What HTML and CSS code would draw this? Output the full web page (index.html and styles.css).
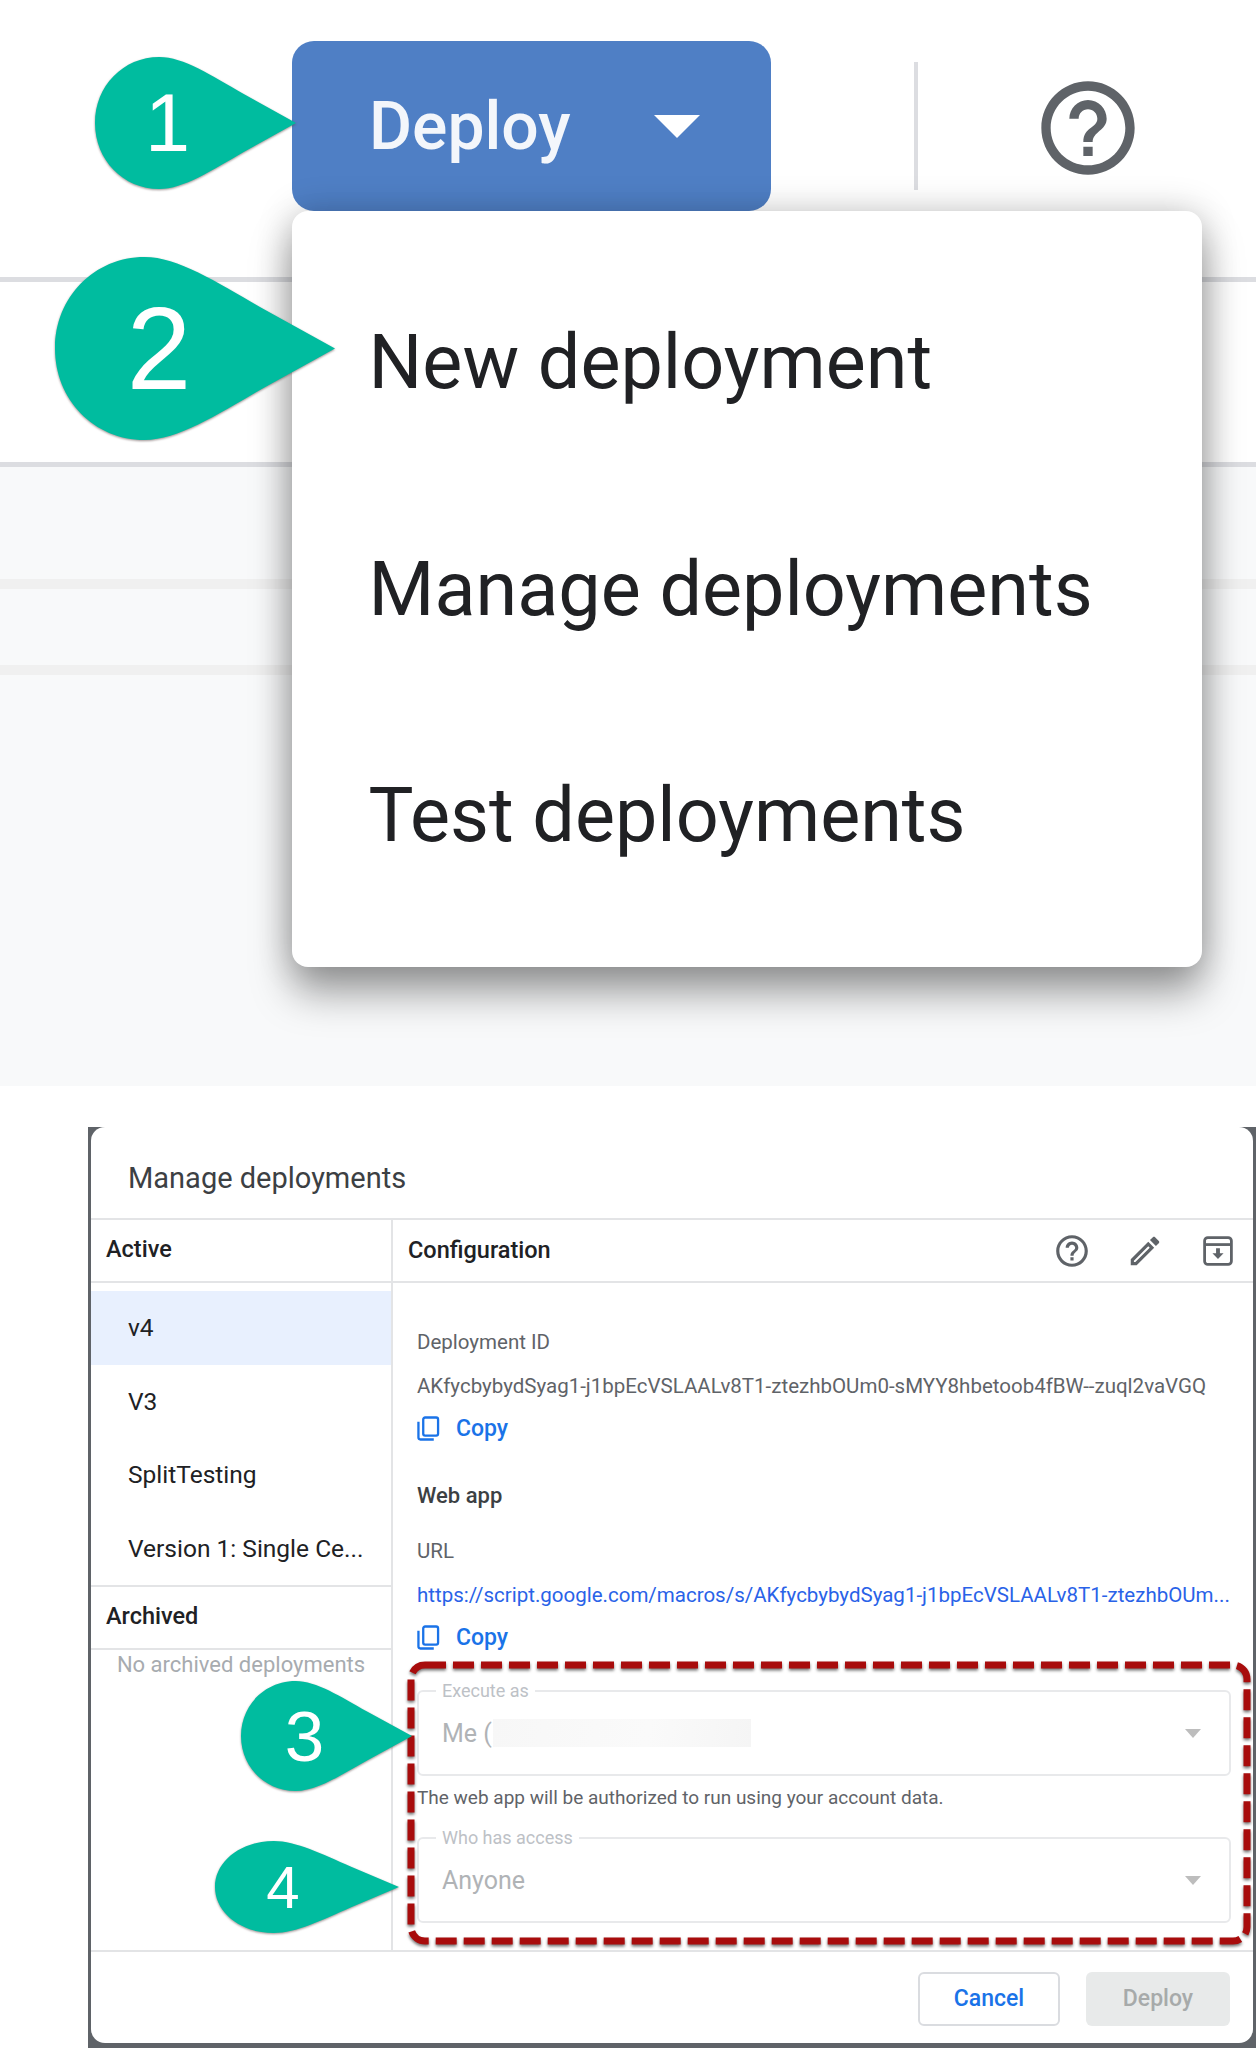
FILE: index.html
```html
<!DOCTYPE html>
<html lang="en">

<head>
    <meta charset="UTF-8">
    <title>Deploy steps</title>
    <link rel="stylesheet" href="styles.css">
</head>

<body>
    <div class="page">

        <section class="editor">
            <div class="toolbar">
                <button class="deploy-button">
                    <span>Deploy</span>
                    <i class="deploy-arrow"></i>
                </button>
                <div class="toolbar-divider"></div>
                <svg class="help-big" viewBox="0 0 24 24">
                    <path d="M11 18h2v-2h-2v2zm1-16C6.48 2 2 6.48 2 12s4.48 10 10 10 10-4.48 10-10S17.52 2 12 2zm0 18c-4.41 0-8-3.59-8-8s3.59-8 8-8 8 3.59 8 8-3.59 8-8 8zm0-14c-2.21 0-4 1.79-4 4h2c0-1.1.9-2 2-2s2 .9 2 2c0 2-3 1.75-3 5h2c0-2.25 3-2.5 3-5 0-2.21-1.79-4-4-4z" />
                </svg>
            </div>
            <div class="editor-row"></div>
            <div class="editor-grey">
                <div class="band band-one"></div>
                <div class="band band-two"></div>
            </div>

            <ul class="deploy-menu">
                <li>New deployment</li>
                <li>Manage deployments</li>
                <li>Test deployments</li>
            </ul>
        </section>

        <section class="dialog-frame">
            <div class="dialog">
                <h2 class="dialog-title">Manage deployments</h2>

                <div class="dialog-body">
                    <aside class="versions">
                        <h3 class="col-head">Active</h3>
                        <ul class="version-list">
                            <li class="selected">v4</li>
                            <li>V3</li>
                            <li>SplitTesting</li>
                            <li>Version 1: Single Ce...</li>
                        </ul>
                        <h3 class="col-head archived-head">Archived</h3>
                        <p class="no-archived">No archived deployments</p>
                    </aside>

                    <div class="config">
                        <div class="col-head config-head">
                            <span>Configuration</span>
                            <div class="config-icons">
                                <svg class="icon-help" viewBox="0 0 24 24">
                                    <path d="M11 18h2v-2h-2v2zm1-16C6.48 2 2 6.48 2 12s4.48 10 10 10 10-4.48 10-10S17.52 2 12 2zm0 18c-4.41 0-8-3.59-8-8s3.59-8 8-8 8 3.59 8 8-3.59 8-8 8zm0-14c-2.21 0-4 1.79-4 4h2c0-1.1.9-2 2-2s2 .9 2 2c0 2-3 1.75-3 5h2c0-2.25 3-2.5 3-5 0-2.21-1.79-4-4-4z" />
                                </svg>
                                <svg class="icon-edit" viewBox="0 0 24 24">
                                    <path d="M14.06 9.02l.92.92L5.92 19H5v-.92l9.06-9.06M17.66 3c-.25 0-.51.1-.7.29l-1.83 1.83 3.75 3.75 1.83-1.83c.39-.39.39-1.02 0-1.41l-2.34-2.34c-.2-.2-.45-.29-.71-.29zm-3.6 3.19L3 17.25V21h3.75L17.81 9.94l-3.75-3.75z" />
                                </svg>
                                <svg class="icon-archive" viewBox="0 0 28 28">
                                    <rect x="1.5" y="1.5" width="25" height="25" rx="3" />
                                    <path d="M1.5 8h25" />
                                    <path class="arrow-fill" d="M12.2 11.5h3.6v4.5h3.4L14 21.5 8.8 16h3.4z" />
                                </svg>
                            </div>
                        </div>

                        <div class="config-content">
                            <p class="field-label first">Deployment ID</p>
                            <p class="field-value">AKfycbybydSyag1-j1bpEcVSLAALv8T1-ztezhbOUm0-sMYY8hbetoob4fBW--zuql2vaVGQ</p>
                            <a class="copy-link">
                                <svg viewBox="0 0 24 26">
                                    <rect x="6.5" y="1.5" width="15.5" height="19" rx="2" />
                                    <path d="M1.5 6v16.5a2 2 0 0 0 2 2h14" />
                                </svg>
                                Copy
                            </a>

                            <h4 class="web-app">Web app</h4>
                            <p class="field-label url-label">URL</p>
                            <p class="url-value">https://script.google.com/macros/s/AKfycbybydSyag1-j1bpEcVSLAALv8T1-ztezhbOUm...</p>
                            <a class="copy-link">
                                <svg viewBox="0 0 24 26">
                                    <rect x="6.5" y="1.5" width="15.5" height="19" rx="2" />
                                    <path d="M1.5 6v16.5a2 2 0 0 0 2 2h14" />
                                </svg>
                                Copy
                            </a>

                            <fieldset class="select-box execute-box">
                                <legend>Execute as</legend>
                                <div class="select-row">
                                    <span>Me (<i class="redacted"></i></span>
                                    <i class="select-arrow"></i>
                                </div>
                            </fieldset>
                            <p class="helper">The web app will be authorized to run using your account data.</p>
                            <fieldset class="select-box">
                                <legend>Who has access</legend>
                                <div class="select-row">
                                    <span>Anyone</span>
                                    <i class="select-arrow"></i>
                                </div>
                            </fieldset>
                        </div>
                    </div>
                </div>

                <div class="dialog-footer">
                    <button class="btn-cancel">Cancel</button>
                    <button class="btn-deploy">Deploy</button>
                </div>
            </div>
        </section>

        <!-- red dashed highlight -->
        <svg class="highlight" viewBox="0 0 851 296">
            <rect x="6" y="5" width="836" height="276" rx="14" />
        </svg>

        <!-- numbered callouts -->
        <div class="callout callout-1">
            <svg viewBox="0 0 100 100" preserveAspectRatio="none"><path d="M100 50L74 28C58 14 44 0 32 0 14 0 0 22 0 50s14 50 32 50c12 0 26-14 42-28z" /></svg>
            <span>1</span>
        </div>
        <div class="callout callout-2">
            <svg viewBox="0 0 100 100" preserveAspectRatio="none"><path d="M100 50L74 28C58 14 44 0 32 0 14 0 0 22 0 50s14 50 32 50c12 0 26-14 42-28z" /></svg>
            <span>2</span>
        </div>
        <div class="callout callout-3">
            <svg viewBox="0 0 100 100" preserveAspectRatio="none"><path d="M100 50L74 28C58 14 44 0 32 0 14 0 0 22 0 50s14 50 32 50c12 0 26-14 42-28z" /></svg>
            <span>3</span>
        </div>
        <div class="callout callout-4">
            <svg viewBox="0 0 100 100" preserveAspectRatio="none"><path d="M100 50L74 28C58 14 44 0 32 0 14 0 0 22 0 50s14 50 32 50c12 0 26-14 42-28z" /></svg>
            <span>4</span>
        </div>

    </div>
</body>

</html>
```
FILE: styles.css
```css
* {
    margin: 0;
    padding: 0;
    box-sizing: border-box;
    font-family: Roboto, "Liberation Sans", sans-serif;
}

body {
    background-color: #fff;
    width: 1256px;
    height: 2048px;
    overflow: hidden;
}

.page {
    position: relative;
    width: 1256px;
    height: 2048px;
    overflow: hidden;
}

/* top part, the editor with the open deploy menu */

.editor {
    position: relative;
    height: 1086px;
    display: flex;
    flex-direction: column;
}

.toolbar {
    height: 282px;
    padding: 41px 0 0 292px;
    display: flex;
    align-items: flex-start;
    border-bottom: 5px solid #dcdde1;
}

.deploy-button {
    width: 479px;
    height: 170px;
    padding: 0 71px 0 77px;
    display: flex;
    align-items: center;
    justify-content: space-between;
    border: none;
    border-radius: 22px;
    background-color: #4f7fc5;
    color: #f3f6fb;
    font-size: 66px;
    font-weight: 500;
}

.deploy-arrow {
    width: 0;
    height: 0;
    border-left: 23px solid transparent;
    border-right: 23px solid transparent;
    border-top: 23px solid #fff;
}

.toolbar-divider {
    width: 4px;
    height: 128px;
    margin: 21px 0 0 143px;
    background-color: #dcdde1;
}

.help-big {
    width: 112px;
    height: 112px;
    margin: 31px 0 0 114px;
    fill: #5f6368;
}

.editor-row {
    height: 185px;
    border-bottom: 5px solid #dcdde1;
}

.editor-grey {
    flex: 1;
    background-color: #f8f9fa;
    padding-top: 112px;
}

.band {
    height: 10px;
    background-color: #f0f0f0;
}

.band-two {
    margin-top: 76px;
}

.deploy-menu {
    position: absolute;
    left: 292px;
    top: 211px;
    width: 910px;
    height: 756px;
    padding: 38px 0;
    list-style: none;
    background-color: #fff;
    border-radius: 16px;
    box-shadow: 0 26px 40px rgba(0, 0, 0, 0.36), 0 0 36px rgba(0, 0, 0, 0.2);
}

.deploy-menu li {
    height: 226.6px;
    padding-left: 76.5px;
    display: flex;
    align-items: center;
    font-size: 75.5px;
    color: #202124;
}

/* bottom part, the manage deployments dialog */

.dialog-frame {
    height: 921px;
    margin: 41px 0 0 88px;
    padding: 0 3px 5px 3px;
    background-color: #5f6368;
}

.dialog {
    height: 100%;
    display: flex;
    flex-direction: column;
    background-color: #fff;
    border-radius: 14px;
}

.dialog-title {
    height: 93px;
    padding: 32px 0 0 37px;
    border-bottom: 2px solid #e3e4e6;
    font-size: 29px;
    line-height: 38px;
    font-weight: 400;
    color: #3c4043;
}

.dialog-body {
    flex: 1;
    display: flex;
    min-height: 0;
}

.versions {
    flex: 0 0 302px;
    border-right: 2px solid #e3e4e6;
}

.col-head {
    height: 63px;
    padding-left: 15px;
    border-bottom: 2px solid #e3e4e6;
    font-size: 23.5px;
    line-height: 59px;
    font-weight: 500;
    color: #202124;
}

.version-list {
    list-style: none;
    padding: 8px 0 0;
    border-bottom: 2px solid #e3e4e6;
}

.version-list li {
    height: 73.5px;
    padding-left: 37px;
    font-size: 24.5px;
    line-height: 73px;
    color: #202124;
    white-space: nowrap;
}

.version-list .selected {
    background-color: #e8f0fe;
}

.no-archived {
    text-align: center;
    font-size: 22px;
    line-height: 30px;
    color: #a7abaf;
}

.config {
    flex: 1;
    min-width: 0;
}

.config-head {
    display: flex;
    align-items: center;
    justify-content: space-between;
    padding-right: 20px;
}

.config-icons {
    display: flex;
    align-items: center;
    gap: 35px;
}

.config-icons svg {
    width: 38px;
    height: 38px;
    fill: #5f6368;
}

.config-icons .icon-archive {
    width: 30px;
    height: 30px;
    margin-left: 4px;
    fill: none;
    stroke: #5f6368;
    stroke-width: 2.6;
}

.icon-archive .arrow-fill {
    fill: #5f6368;
    stroke: none;
}

.config-content {
    padding: 46px 22px 0 24px;
}

.field-label {
    font-size: 20.5px;
    line-height: 26px;
    color: #5f6368;
}

.field-value {
    margin-top: 18px;
    font-size: 20.5px;
    line-height: 26px;
    color: #5f6368;
    white-space: nowrap;
}

.copy-link {
    display: flex;
    align-items: center;
    gap: 16px;
    height: 32px;
    margin-top: 13px;
    font-size: 23px;
    font-weight: 500;
    color: #1a73e8;
}

.copy-link svg {
    width: 23px;
    height: 25px;
    fill: none;
    stroke: #1a73e8;
    stroke-width: 2.4;
}

.web-app {
    margin-top: 39px;
    font-size: 22px;
    line-height: 26px;
    font-weight: 500;
    color: #3c4043;
}

.url-label {
    margin-top: 29px;
}

.url-value {
    margin-top: 18px;
    font-size: 20.5px;
    line-height: 26px;
    color: #2962e8;
    white-space: nowrap;
}

.select-box {
    height: 97px;
    margin-top: 26px;
    padding: 0 24px 0 23px;
    border: 2px solid #e8e9eb;
    border-radius: 6px;
}

.select-box legend {
    padding: 0 6px;
    margin-left: -6px;
    font-size: 18px;
    line-height: 24px;
    color: #bdc1c6;
}

.select-row {
    height: 60px;
    display: flex;
    align-items: center;
    justify-content: space-between;
    padding-right: 4px;
    font-size: 25px;
    color: #b0b3b6;
}

.select-row span {
    display: flex;
    align-items: center;
}

.redacted {
    display: inline-block;
    width: 258px;
    height: 28px;
    margin-left: 1px;
    background: linear-gradient(100deg, #f7f7f7, #fafafa 60%, #f5f5f5);
}

.select-arrow {
    width: 0;
    height: 0;
    border-left: 8px solid transparent;
    border-right: 8px solid transparent;
    border-top: 9px solid #bdbdbd;
}

.helper {
    margin-top: 9px;
    font-size: 19px;
    line-height: 26px;
    color: #5f6368;
}

.helper + .select-box {
    margin-top: 15px;
}

.dialog-footer {
    height: 93px;
    padding: 20px 23px 0 0;
    border-top: 2px solid #e3e4e6;
    display: flex;
    justify-content: flex-end;
    gap: 26px;
}

.dialog-footer button {
    height: 54px;
    padding-bottom: 2px;
    font-size: 23px;
    font-weight: 500;
    border-radius: 6px;
}

.btn-cancel {
    width: 142px;
    background-color: #fff;
    border: 2px solid #dadce0;
    color: #1a73e8;
}

.btn-deploy {
    width: 144px;
    background-color: #e8eaea;
    border: none;
    color: #a7aaaa;
}

/* overlays */

.highlight {
    position: absolute;
    left: 405px;
    top: 1660px;
    width: 851px;
    height: 296px;
    fill: none;
    stroke: #a80c0c;
    stroke-width: 7;
    stroke-dasharray: 21 7;
    filter: drop-shadow(0 2px 1.5px rgba(0, 0, 0, 0.55));
}

.callout {
    position: absolute;
    display: flex;
    align-items: center;
    justify-content: center;
    color: #fff;
}

.callout svg {
    position: absolute;
    left: 0;
    top: 0;
    width: 100%;
    height: 100%;
    fill: #00bc9f;
    filter: drop-shadow(0 1px 1px rgba(90, 70, 70, 0.6));
}

.callout span {
    position: relative;
    font-family: "Liberation Sans", sans-serif;
}

.callout-1 {
    left: 95px;
    top: 57px;
    width: 201px;
    height: 132px;
    padding-right: 56px;
    font-size: 81px;
}

.callout-2 {
    left: 55px;
    top: 257px;
    width: 280px;
    height: 183px;
    padding-right: 72px;
    font-size: 116px;
}

.callout-3 {
    left: 241px;
    top: 1681px;
    width: 171px;
    height: 110px;
    padding-right: 44px;
    font-size: 71px;
}

.callout-4 {
    left: 215px;
    top: 1841px;
    width: 184px;
    height: 92px;
    padding-right: 48px;
    font-size: 60px;
}
```
